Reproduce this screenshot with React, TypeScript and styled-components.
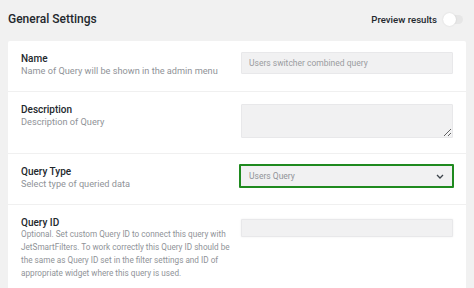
import React from "react";
import styled, { createGlobalStyle } from "styled-components";

const Global = createGlobalStyle`
  html, body { margin: 0; padding: 0; background: #f1f1f1; }
  body { font-family: Roboto, "Liberation Sans", sans-serif; color: #23282d; }
  * { box-sizing: border-box; }
`;

const Page = styled.div`
  width: 474px;
  height: 288px;
  overflow: hidden;
  background: #f1f1f1;
`;

const Header = styled.div`
  height: 41px;
  display: flex;
  align-items: center;
  justify-content: space-between;
  padding: 0 11px 3px 8px;
`;

const Title = styled.h2`
  margin: 0;
  font-size: 12px;
  font-weight: 500;
  color: #23282d;
`;

const PreviewWrap = styled.label`
  display: flex;
  align-items: center;
  gap: 6px;
  font-size: 9.6px;
  font-weight: 500;
  color: #23282d;
`;

const Track = styled.span`
  position: relative;
  width: 20px;
  height: 9px;
  border-radius: 5px;
  background: #e6e6e6;
`;

const Knob = styled.span`
  position: absolute;
  left: 0;
  top: -2px;
  width: 13px;
  height: 13px;
  border-radius: 50%;
  background: #fff;
  box-shadow: 0 0 2px rgba(0, 0, 0, 0.12);
`;

const Card = styled.div`
  margin: 0 8px;
  background: #fff;
  border-radius: 2px;
`;

const Row = styled.div<{ $bottom?: number }>`
  display: grid;
  grid-template-columns: 1fr 212px;
  column-gap: 8px;
  align-items: start;
  padding: 13px 13px ${(p) => p.$bottom ?? 14}px 13px;
  border-bottom: 1px solid #f0f0f0;
`;

const Info = styled.div``;

const Label = styled.div`
  font-size: 10px;
  font-weight: 500;
  line-height: 10px;
  color: #23282d;
`;

const Desc = styled.div<{ $size?: number }>`
  font-size: ${(p) => p.$size ?? 9.2}px;
  line-height: 13px;
  color: #909398;
`;

const Input = styled.input`
  display: block;
  width: 212px;
  height: 22px;
  margin: -2px 0 0 0;
  padding: 0 7px;
  border: 1px solid #e8e8ea;
  border-radius: 1px;
  background: #f1f1f2;
  font-family: Roboto, "Liberation Sans", sans-serif;
  font-size: 8.5px;
  color: #555;
  outline: none;
  &::placeholder { color: #9a9ca0; }
`;

const SmallInput = styled(Input)`
  height: 18px;
  margin-top: 1px;
  box-shadow: 0 0 2px rgba(0, 0, 0, 0.08);
`;

const TextArea = styled.textarea`
  display: block;
  width: 212px;
  height: 34px;
  margin: -1px 0 0 0;
  padding: 4px 7px;
  border: 1px solid #e8e8ea;
  border-radius: 1px;
  background: #f1f1f2;
  font-family: Roboto, "Liberation Sans", sans-serif;
  font-size: 8.5px;
  outline: none;
  resize: vertical;
`;

const SelectBox = styled.div`
  width: 215px;
  height: 24px;
  margin: -3px -1px 0 -2px;
  display: flex;
  align-items: center;
  justify-content: space-between;
  padding: 0 8px 0 8px;
  border: 2px solid #1f8a1f;
  border-radius: 1px;
  background: #f1f1f2;
  font-size: 8.5px;
  color: #909398;
`;

export default function App() {
  return (
    <Page>
      <Global />
      <Header>
        <Title>General Settings</Title>
        <PreviewWrap>
          Preview results
          <Track>
            <Knob />
          </Track>
        </PreviewWrap>
      </Header>
      <Card>
        <Row>
          <Info>
            <Label>Name</Label>
            <Desc>Name of Query will be shown in the admin menu</Desc>
          </Info>
          <Input placeholder="Users switcher combined query" />
        </Row>
        <Row $bottom={15}>
          <Info>
            <Label>Description</Label>
            <Desc>Description of Query</Desc>
          </Info>
          <TextArea />
        </Row>
        <Row>
          <Info>
            <Label>Query Type</Label>
            <Desc>Select type of queried data</Desc>
          </Info>
          <SelectBox>
            <span>Users Query</span>
            <svg width="8" height="5" viewBox="0 0 8 5">
              <path d="M1 1l3 3 3-3" fill="none" stroke="#3c434a" strokeWidth="1.3" />
            </svg>
          </SelectBox>
        </Row>
        <Row>
          <Info>
            <Label>Query ID</Label>
            <Desc $size={8.2}>
              Optional. Set custom Query ID to connect this query with JetSmartFilters. To work
              correctly this Query ID should be the same as Query ID set in the filter settings
              and ID of appropriate widget where this query is used.
            </Desc>
          </Info>
          <SmallInput />
        </Row>
      </Card>
    </Page>
  );
}
